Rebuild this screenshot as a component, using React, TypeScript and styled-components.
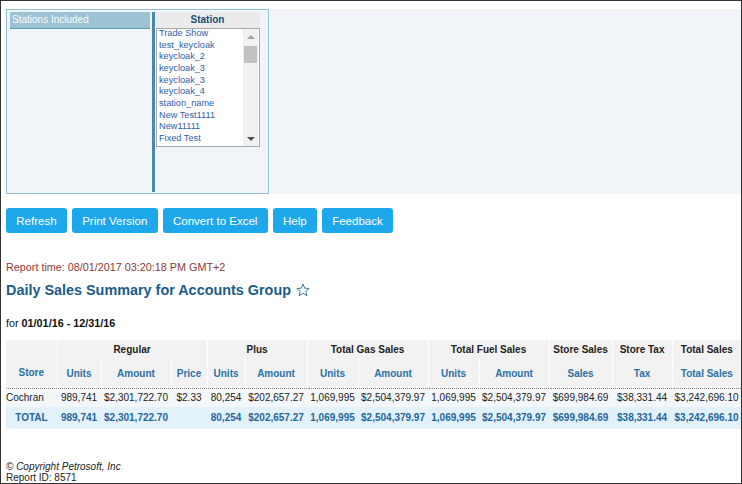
import styled, { createGlobalStyle } from "styled-components";

const GlobalStyle = createGlobalStyle`
  html, body {
    margin: 0;
    padding: 0;
    background: #fff;
  }
  body {
    font-family: "Liberation Sans", Arial, sans-serif;
    color: #222;
  }
`;

const stations = [
  "Trade Show",
  "test_keycloak",
  "keycloak_2",
  "keycloak_3",
  "keycloak_3",
  "keycloak_4",
  "station_name",
  "New Test1111",
  "New11111",
  "Fixed Test",
];

const buttons = ["Refresh", "Print Version", "Convert to Excel", "Help", "Feedback"];

const columns = [51, 44, 70, 36, 38, 62, 51, 70, 51, 70, 63, 60, 69];

const groups = [
  { label: "Regular", span: 3 },
  { label: "Plus", span: 2 },
  { label: "Total Gas Sales", span: 2 },
  { label: "Total Fuel Sales", span: 2 },
  { label: "Store Sales", span: 1 },
  { label: "Store Tax", span: 1 },
  { label: "Total Sales", span: 1 },
];

const subHeads = [
  "Units",
  "Amount",
  "Price",
  "Units",
  "Amount",
  "Units",
  "Amount",
  "Units",
  "Amount",
  "Sales",
  "Tax",
  "Total Sales",
];

const rows = [
  {
    store: "Cochran",
    total: false,
    values: [
      "989,741",
      "$2,301,722.70",
      "$2.33",
      "80,254",
      "$202,657.27",
      "1,069,995",
      "$2,504,379.97",
      "1,069,995",
      "$2,504,379.97",
      "$699,984.69",
      "$38,331.44",
      "$3,242,696.10",
    ],
  },
  {
    store: "TOTAL",
    total: true,
    values: [
      "989,741",
      "$2,301,722.70",
      "",
      "80,254",
      "$202,657.27",
      "1,069,995",
      "$2,504,379.97",
      "1,069,995",
      "$2,504,379.97",
      "$699,984.69",
      "$38,331.44",
      "$3,242,696.10",
    ],
  },
];

const App = () => {
  return (
    <>
      <GlobalStyle />
      <Page>
        <FilterPanel>
          <FilterBox>
            <IncludedColumn>
              <IncludedHeader>Stations Included</IncludedHeader>
            </IncludedColumn>
            <Divider />
            <StationColumn>
              <StationHeader>Station</StationHeader>
              <ListBox>
                <ListItems>
                  {stations.map((s, i) => (
                    <ListItem key={i}>{s}</ListItem>
                  ))}
                </ListItems>
                <ScrollBar>
                  <ArrowBox>
                    <Arrow $dir="up" />
                  </ArrowBox>
                  <Thumb />
                  <ScrollSpacer />
                  <ArrowBox>
                    <Arrow $dir="down" />
                  </ArrowBox>
                </ScrollBar>
              </ListBox>
            </StationColumn>
          </FilterBox>
          <FilterFill />
        </FilterPanel>

        <ButtonRow>
          {buttons.map((b) => (
            <ActionButton key={b}>{b}</ActionButton>
          ))}
        </ButtonRow>

        <ReportTime>Report time: 08/01/2017 03:20:18 PM GMT+2</ReportTime>
        <Title>
          Daily Sales Summary for Accounts Group
          <StarIcon width="14" height="14" viewBox="0 0 24 24">
            <polygon
              points="12,1.8 14.9,8.9 22.6,9.4 16.7,14.3 18.6,21.8 12,17.7 5.4,21.8 7.3,14.3 1.4,9.4 9.1,8.9"
              fill="none"
              stroke="#2f6f9f"
              strokeWidth="1.6"
              strokeLinejoin="miter"
            />
          </StarIcon>
        </Title>
        <Period>
          for <b>01/01/16 - 12/31/16</b>
        </Period>

        <SalesTable>
          <colgroup>
            {columns.map((w, i) => (
              <Col key={i} $width={w} />
            ))}
          </colgroup>
          <thead>
            <tr>
              <StoreHead rowSpan={2}>Store</StoreHead>
              {groups.map((g) => (
                <GroupHead key={g.label} colSpan={g.span}>
                  {g.label}
                </GroupHead>
              ))}
            </tr>
            <tr>
              {subHeads.map((h, i) => (
                <SubHead key={i}>{h}</SubHead>
              ))}
            </tr>
          </thead>
          <tbody>
            {rows.map((r) => (
              <DataRow key={r.store} $total={r.total}>
                <StoreCell $total={r.total}>{r.store}</StoreCell>
                {r.values.map((v, i) => (
                  <Cell key={i}>{v}</Cell>
                ))}
              </DataRow>
            ))}
          </tbody>
        </SalesTable>

        <Footer>
          <Copyright>© Copyright Petrosoft, Inc</Copyright>
          <div>Report ID: 8571</div>
        </Footer>
      </Page>
    </>
  );
};

export default App;

const Page = styled.div`
  box-sizing: border-box;
  width: 742px;
  height: 484px;
  border: 1px solid #333;
  padding: 8px 0 0 5px;
  overflow: hidden;
`;

const FilterPanel = styled.div`
  display: flex;
  gap: 1px;
  height: 185px;
`;

const FilterBox = styled.div`
  box-sizing: border-box;
  display: flex;
  width: 263px;
  height: 185px;
  padding: 2px 0 1px 3px;
  border: 1px solid #94bfd2;
  background: #f1f5f9;
`;

const FilterFill = styled.div`
  flex: 1;
  background: #f1f5f9;
`;

const IncludedColumn = styled.div`
  width: 140px;
`;

const IncludedHeader = styled.div`
  height: 16px;
  padding-left: 2px;
  border-bottom: 1px solid #5f9dbb;
  background: #9cc2d4;
  color: #fbfdff;
  font-size: 10px;
  line-height: 16px;
`;

const Divider = styled.div`
  width: 3px;
  margin-left: 2px;
  background: #4a89ae;
`;

const StationColumn = styled.div`
  width: 105px;
`;

const StationHeader = styled.div`
  height: 16px;
  background: #ebebeb;
  color: #1c4f73;
  font-size: 10px;
  font-weight: bold;
  line-height: 16px;
  text-align: center;
`;

const ListBox = styled.div`
  box-sizing: border-box;
  display: flex;
  width: 104px;
  height: 119px;
  margin-left: 1px;
  border: 1px solid #a9a9a9;
  background: #fff;
  overflow: hidden;
`;

const ListItems = styled.div`
  flex: 1;
  padding-left: 2px;
  margin-top: -1px;
`;

const ListItem = styled.div`
  color: #2f5ea6;
  font-size: 9.2px;
  line-height: 11.67px;
  white-space: nowrap;
`;

const ScrollBar = styled.div`
  display: flex;
  flex-direction: column;
  width: 15px;
  margin-right: 1px;
  background: #f1f1f1;
`;

const ArrowBox = styled.div`
  display: flex;
  align-items: center;
  justify-content: center;
  height: 15px;
`;

const Arrow = styled.div<{ $dir: "up" | "down" }>`
  width: 0;
  height: 0;
  border-left: 4px solid transparent;
  border-right: 4px solid transparent;
  ${(p) =>
    p.$dir === "up"
      ? "border-bottom: 4px solid #a3a3a3;"
      : "border-top: 4px solid #505050;"}
`;

const Thumb = styled.div`
  height: 17px;
  margin: 2px 1px 0;
  background: #c1c1c1;
`;

const ScrollSpacer = styled.div`
  flex: 1;
`;

const ButtonRow = styled.div`
  display: flex;
  gap: 5px;
  margin-top: 14px;
`;

const ActionButton = styled.button`
  height: 25px;
  padding: 0 10.3px;
  border: none;
  border-radius: 3px;
  background: #1ea8ec;
  color: #fff;
  font-family: "Liberation Sans", Arial, sans-serif;
  font-size: 11.5px;
  cursor: pointer;
`;

const ReportTime = styled.div`
  margin-top: 28px;
  color: #8c3a3a;
  font-size: 10.8px;
  line-height: 13px;
`;

const Title = styled.div`
  display: flex;
  align-items: center;
  gap: 5px;
  margin-top: 8px;
  color: #1b5c87;
  font-size: 14.4px;
  font-weight: bold;
  line-height: 17px;
`;

const StarIcon = styled.svg`
  flex-shrink: 0;
  margin-top: -2px;
`;

const Period = styled.div`
  margin-top: 18px;
  color: #111;
  font-size: 10.8px;
  line-height: 13px;
`;

const SalesTable = styled.table`
  width: 735px;
  margin-top: 10px;
  border-collapse: collapse;
  border-spacing: 0;
  table-layout: fixed;
  font-size: 10px;
`;

const Col = styled.col<{ $width: number }>`
  width: ${(p) => p.$width}px;
`;

const GroupHead = styled.th`
  height: 18px;
  padding: 0;
  border-left: 1px solid #fff;
  background: #f2f2f2;
  color: #222;
  font-weight: bold;
  white-space: nowrap;
`;

const SubHead = styled.th`
  height: 30px;
  padding: 0;
  border-left: 1px solid #fff;
  border-bottom: 1px dotted #8a8a8a;
  background: #f2f2f2;
  color: #2b71a4;
  font-weight: bold;
  white-space: nowrap;
`;

const StoreHead = styled(SubHead)`
  vertical-align: bottom;
  line-height: 30px;
  border-left: none;
`;

const DataRow = styled.tr<{ $total: boolean }>`
  height: ${(p) => (p.$total ? 22 : 18)}px;
  background: ${(p) => (p.$total ? "#e3f1fb" : "#f3f7fa")};
  color: ${(p) => (p.$total ? "#24679a" : "#222")};
  font-weight: ${(p) => (p.$total ? "bold" : "normal")};
`;

const StoreCell = styled.td<{ $total: boolean }>`
  padding: 0;
  text-align: ${(p) => (p.$total ? "center" : "left")};
  white-space: nowrap;
`;

const Cell = styled.td`
  padding: 0;
  text-align: center;
  white-space: nowrap;
`;

const Footer = styled.div`
  margin-top: 32px;
  color: #222;
  font-size: 10px;
  line-height: 11px;
`;

const Copyright = styled.div`
  font-style: italic;
`;
